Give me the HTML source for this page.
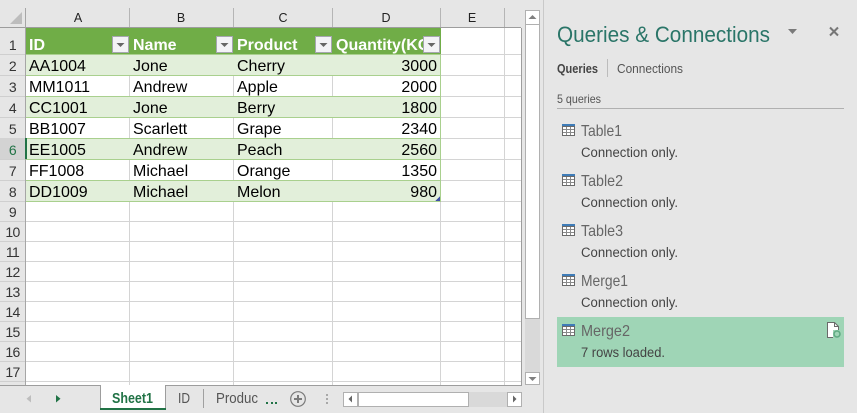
<!DOCTYPE html>
<html>
<head>
<meta charset="utf-8">
<style>
html,body{margin:0;padding:0;width:857px;height:413px;overflow:hidden;background:#e6e6e6}
svg{display:block}
text{font-family:"Liberation Sans",Arial,sans-serif}
.c{font-size:16px;fill:#000}
.h{font-size:16px;font-weight:bold;fill:#fff}
.rn{font-size:14px;fill:#333;text-anchor:middle;letter-spacing:-0.6px}
.cn{font-size:12.5px;fill:#222;text-anchor:middle}
.qt{font-size:16px;fill:#666}
.qs{font-size:13.5px;fill:#444}
</style>
</head>
<body>
<svg width="857" height="413" viewBox="0 0 857 413" xmlns="http://www.w3.org/2000/svg" shape-rendering="crispEdges">
<defs>
<clipPath id="q"><rect x="333" y="28" width="90" height="26"/></clipPath>
<g id="btn">
<rect x="0.5" y="0.5" width="16" height="16" fill="#f3f3f6" stroke="#a6a6b0"/>
<path d="M4.500 7h8l-4 4z" fill="#666" shape-rendering="auto"/>
</g>
<g id="ti">
<rect x="0" y="0" width="13" height="3" fill="#3f7cb8"/>
<rect x="0.5" y="2.5" width="12" height="9" fill="#fff" stroke="#6a6a6a"/>
<path d="M4.500 3v8M8.500 3v8M1 5.500h11M1 8.500h11" stroke="#8a8a8a" fill="none"/>
</g>
</defs>

<rect width="857" height="413" fill="#e6e6e6"/>

<!-- sheet area -->
<rect x="26" y="28" width="495" height="357" fill="#fff"/>

<!-- grid lines -->
<g stroke="#d4d4d4" fill="none">
<path d="M26 54.500H521M26 75.500H521M26 96.500H521M26 117.500H521M26 138.500H521M26 159.500H521M26 180.500H521M26 201.500H521M26 221.500H521M26 241.500H521M26 261.500H521M26 281.500H521M26 301.500H521M26 321.500H521M26 341.500H521M26 361.500H521M26 381.500H521"/>
<path d="M129.500 28V385M233.500 28V385M332.500 28V385M440.500 28V385M504.500 28V385"/>
</g>

<!-- table -->
<rect x="26" y="28" width="415" height="26" fill="#70ad47"/>
<g fill="#e2efda">
<rect x="26" y="55" width="415" height="20"/>
<rect x="26" y="97" width="415" height="20"/>
<rect x="26" y="139" width="415" height="20"/>
<rect x="26" y="181" width="415" height="20"/>
</g>
<g stroke="#a9d08e" fill="none">
<path d="M26 54.500H441M26 75.500H441M26 96.500H441M26 117.500H441M26 138.500H441M26 159.500H441M26 180.500H441M26 201.500H441"/>
<path d="M440.500 54V202"/>
</g>
<path d="M435 201h5v-5z" fill="#3f4fa8"/>

<!-- column headers -->
<rect x="0" y="8" width="521" height="20" fill="#e6e6e6"/>
<path d="M10 24h12V12z" fill="#bdbdbd" shape-rendering="auto"/>
<g stroke="#b5b5b5" fill="none">
<path d="M129.500 8V27M233.500 8V27M332.500 8V27M440.500 8V27M504.500 8V27"/>
</g>
<path d="M0 27.500H521" stroke="#9d9d9d" fill="none"/>
<path d="M25.500 8V385" stroke="#a6a6a6" fill="none"/>
<rect x="0" y="138" width="25" height="21" fill="#d3d3d3"/>
<rect x="25" y="138" width="2" height="21" fill="#217346"/>
<path d="M521.500 28V385" stroke="#9d9d9d" fill="none"/>
<path d="M0 385.500H522" stroke="#9d9d9d" fill="none"/>
<g stroke="#cfcfcf" fill="none">
<path d="M0 54.500H25M0 75.500H25M0 96.500H25M0 117.500H25M0 159.500H25M0 180.500H25M0 201.500H25M0 221.500H25M0 241.500H25M0 261.500H25M0 281.500H25M0 301.500H25M0 321.500H25M0 341.500H25M0 361.500H25M0 381.500H25"/>
</g>

<g shape-rendering="auto">
<text class="cn" x="78" y="22">A</text>
<text class="cn" x="181" y="22">B</text>
<text class="cn" x="283" y="22">C</text>
<text class="cn" x="386" y="22">D</text>
<text class="cn" x="472" y="22">E</text>

<text class="rn" x="12.500" y="50">1</text>
<text class="rn" x="12.500" y="71">2</text>
<text class="rn" x="12.500" y="92">3</text>
<text class="rn" x="12.500" y="113">4</text>
<text class="rn" x="12.500" y="134">5</text>
<text class="rn" x="12.500" y="155" style="fill:#217346">6</text>
<text class="rn" x="12.500" y="176">7</text>
<text class="rn" x="12.500" y="197">8</text>
<text class="rn" x="12.500" y="217">9</text>
<text class="rn" x="12.500" y="237">10</text>
<text class="rn" x="12.500" y="257">11</text>
<text class="rn" x="12.500" y="277">12</text>
<text class="rn" x="12.500" y="297">13</text>
<text class="rn" x="12.500" y="317">14</text>
<text class="rn" x="12.500" y="337">15</text>
<text class="rn" x="12.500" y="357">16</text>
<text class="rn" x="12.500" y="377">17</text>

<text class="h" x="29" y="50">ID</text>
<text class="h" x="133" y="50">Name</text>
<text class="h" x="237" y="50">Product</text>
<g clip-path="url(#q)"><text class="h" x="336" y="50">Quantity(KG)</text></g>

<text class="c" x="29" y="71">AA1004</text>
<text class="c" x="29" y="92">MM1011</text>
<text class="c" x="29" y="113">CC1001</text>
<text class="c" x="29" y="134">BB1007</text>
<text class="c" x="29" y="155">EE1005</text>
<text class="c" x="29" y="176">FF1008</text>
<text class="c" x="29" y="197">DD1009</text>

<text class="c" x="133" y="71">Jone</text>
<text class="c" x="133" y="92">Andrew</text>
<text class="c" x="133" y="113">Jone</text>
<text class="c" x="133" y="134">Scarlett</text>
<text class="c" x="133" y="155">Andrew</text>
<text class="c" x="133" y="176">Michael</text>
<text class="c" x="133" y="197">Michael</text>

<text class="c" x="237" y="71">Cherry</text>
<text class="c" x="237" y="92">Apple</text>
<text class="c" x="237" y="113">Berry</text>
<text class="c" x="237" y="134">Grape</text>
<text class="c" x="237" y="155">Peach</text>
<text class="c" x="237" y="176">Orange</text>
<text class="c" x="237" y="197">Melon</text>

<g text-anchor="end">
<text class="c" x="437" y="71">3000</text>
<text class="c" x="437" y="92">2000</text>
<text class="c" x="437" y="113">1800</text>
<text class="c" x="437" y="134">2340</text>
<text class="c" x="437" y="155">2560</text>
<text class="c" x="437" y="176">1350</text>
<text class="c" x="437" y="197">980</text>
</g>
</g>

<use href="#btn" x="112" y="36"/>
<use href="#btn" x="216" y="36"/>
<use href="#btn" x="315" y="36"/>
<use href="#btn" x="423" y="36"/>

<!-- vertical scrollbar -->
<rect x="525" y="10" width="15" height="375" fill="#d9d9d9"/>
<rect x="525.500" y="10.500" width="14" height="14" fill="#fff" stroke="#b0b0b0"/>
<path d="M528.500 19h8l-4-4z" fill="#808080" shape-rendering="auto"/>
<rect x="525.500" y="24.500" width="14" height="294" fill="#fff" stroke="#b0b0b0"/>
<rect x="525.500" y="372.500" width="14" height="12" fill="#fff" stroke="#b0b0b0"/>
<path d="M528.500 377h8l-4 4z" fill="#808080" shape-rendering="auto"/>
<rect x="543" y="0" width="1" height="413" fill="#c9c9c9"/>

<!-- tab bar -->
<rect x="100" y="385" width="66" height="23" fill="#fff"/>
<path d="M100.500 385V408M165.500 385V408" stroke="#9d9d9d" fill="none"/>
<rect x="100" y="408" width="66" height="2" fill="#217346"/>
<path d="M31 395v7.500l-4.500-3.750z" fill="#bdbdbd" shape-rendering="auto"/>
<path d="M56 395v7.500l4.500-3.750z" fill="#217346" shape-rendering="auto"/>
<path d="M203.500 389V408" stroke="#a0a0a0" fill="none"/>
<g shape-rendering="auto">
<text x="112" y="403" font-size="14.500" font-weight="bold" fill="#217346" textLength="41" lengthAdjust="spacingAndGlyphs">Sheet1</text>
<text x="178" y="403" font-size="14.500" fill="#555" textLength="12" lengthAdjust="spacingAndGlyphs">ID</text>
<text x="216" y="403" font-size="14.500" fill="#555" textLength="42" lengthAdjust="spacingAndGlyphs">Produc</text>
</g>
<path d="M266 402h2v2h-2zM271 402h2v2h-2zM275 402h2v2h-2z" fill="#217346"/>
<g shape-rendering="auto" fill="none" stroke="#7a7a7a">
<circle cx="298" cy="399" r="7.300" stroke-width="1.200"/>
<path d="M298 395v8M294 399h8" stroke-width="2"/>
</g>
<path d="M326 394h2v2h-2zM326 398h2v2h-2zM326 402h2v2h-2z" fill="#a8a8a8"/>

<!-- horizontal scrollbar -->
<rect x="343" y="392" width="179" height="15" fill="#d9d9d9"/>
<rect x="343.500" y="392.500" width="14" height="14" fill="#fff" stroke="#b0b0b0"/>
<path d="M352 395.500v7l-3.500-3.500z" fill="#666" shape-rendering="auto"/>
<rect x="358.500" y="392.500" width="110" height="14" fill="#fff" stroke="#b0b0b0"/>
<rect x="507.500" y="392.500" width="14" height="14" fill="#fff" stroke="#b0b0b0"/>
<path d="M513 395.500v7l3.500-3.500z" fill="#666" shape-rendering="auto"/>

<!-- panel -->
<g shape-rendering="auto">
<text x="557" y="42" font-size="22" fill="#2a7568" textLength="213" lengthAdjust="spacingAndGlyphs">Queries &amp; Connections</text>
<path d="M788 29h9l-4.500 5z" fill="#7a7a7a"/>
<path d="M830 27.500l8 8M838 27.500l-8 8" stroke="#777" stroke-width="2" fill="none"/>
<text x="557" y="73" font-size="12.500" font-weight="bold" fill="#444" textLength="41" lengthAdjust="spacingAndGlyphs">Queries</text>
<text x="617" y="73" font-size="12.500" fill="#555" textLength="66" lengthAdjust="spacingAndGlyphs">Connections</text>
<text x="557" y="103" font-size="12" fill="#555" textLength="44" lengthAdjust="spacingAndGlyphs">5 queries</text>
</g>
<rect x="607" y="59" width="1" height="18" fill="#bcbcbc"/>
<rect x="557" y="108" width="287" height="1" fill="#b0b0b0"/>

<rect x="557" y="317" width="287" height="50" fill="#9fd5b6"/>

<use href="#ti" x="562" y="124"/>
<use href="#ti" x="562" y="174"/>
<use href="#ti" x="562" y="224"/>
<use href="#ti" x="562" y="274"/>
<use href="#ti" x="562" y="324"/>

<g shape-rendering="auto">
<text class="qt" x="581" y="136" textLength="41" lengthAdjust="spacingAndGlyphs">Table1</text>
<text class="qs" x="581" y="157" textLength="97" lengthAdjust="spacingAndGlyphs">Connection only.</text>
<text class="qt" x="581" y="186" textLength="42" lengthAdjust="spacingAndGlyphs">Table2</text>
<text class="qs" x="581" y="207" textLength="97" lengthAdjust="spacingAndGlyphs">Connection only.</text>
<text class="qt" x="581" y="236" textLength="42" lengthAdjust="spacingAndGlyphs">Table3</text>
<text class="qs" x="581" y="257" textLength="97" lengthAdjust="spacingAndGlyphs">Connection only.</text>
<text class="qt" x="581" y="286" textLength="47" lengthAdjust="spacingAndGlyphs">Merge1</text>
<text class="qs" x="581" y="307" textLength="97" lengthAdjust="spacingAndGlyphs">Connection only.</text>
<text class="qt" x="581" y="336" textLength="49" lengthAdjust="spacingAndGlyphs">Merge2</text>
<text class="qs" x="581" y="357" textLength="84" lengthAdjust="spacingAndGlyphs">7 rows loaded.</text>

<path d="M827.500 322.500h7l4 4v11h-11z" fill="#fff" stroke="#6a6a6a"/>
<path d="M834.500 322.500v4h4" fill="none" stroke="#6a6a6a"/>
<rect x="833" y="330" width="8" height="8" fill="#9fd5b6"/>
<circle cx="837" cy="334" r="3" fill="none" stroke="#5fa982" stroke-width="1.500"/>
</g>
</svg>
</body>
</html>
